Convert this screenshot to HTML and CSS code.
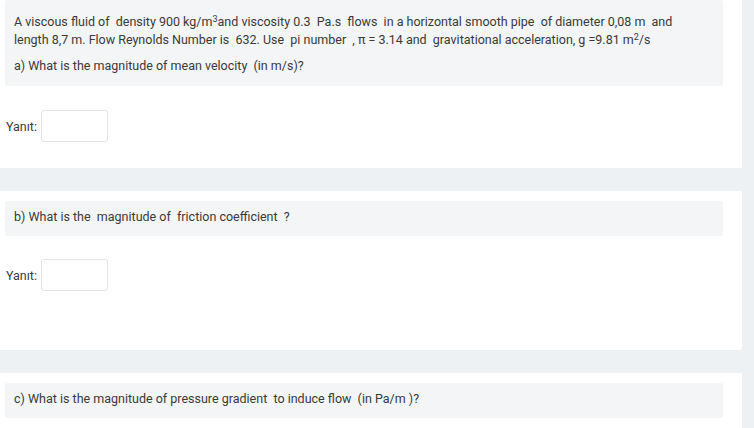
FILE: index.html
```html
<!DOCTYPE html>
<html>
<head>
<meta charset="utf-8">
<link rel="stylesheet" href="styles.css">
</head>
<body>
<div class="page">
  <div class="main">
    <div class="que first">
      <div class="formulation">
        <p class="intro">A viscous fluid of&nbsp; density 900 kg/m<sup>3</sup>and viscosity 0.3&nbsp; Pa.s&nbsp; flows&nbsp; in a horizontal smooth pipe&nbsp; of diameter 0,08 m&nbsp; and length 8,7 m. Flow Reynolds Number is&nbsp; 632. Use&nbsp; pi number&nbsp; , π = 3.14 and&nbsp; gravitational acceleration, g =9.81 m<sup>2</sup>/s</p>
        <p>a) What is the magnitude of mean velocity&nbsp; (in m/s)?</p>
      </div>
      <div class="answer">
        <label>Yanıt:</label>
        <span class="input"></span>
      </div>
    </div>
    <div class="band"></div>
    <div class="que second">
      <div class="formulation">
        <p>b) What is the&nbsp; magnitude of&nbsp; friction coefficient&nbsp; ?</p>
      </div>
      <div class="answer">
        <label>Yanıt:</label>
        <span class="input"></span>
      </div>
    </div>
    <div class="band"></div>
    <div class="que third">
      <div class="formulation">
        <p>c) What is the magnitude of pressure gradient&nbsp; to induce flow&nbsp; (in Pa/m )?</p>
      </div>
    </div>
  </div>
  <div class="strip"></div>
</div>
</body>
</html>
```
FILE: styles.css
```css
html, body {
  margin: 0;
  padding: 0;
  background: #ffffff;
}
body {
  font-family: Roboto, "Liberation Sans", sans-serif;
  font-size: 12.5px;
  color: #3a3a3a;
  width: 754px;
  height: 428px;
  overflow: hidden;
}
.page {
  display: flex;
  height: 428px;
}
.main {
  width: 742px;
  background: #ffffff;
}
.strip {
  width: 12px;
  background: #eef1f3;
}
.que {
  padding: 0 19px 0 5px;
}
.formulation {
  background: #f3f5f7;
  border-radius: 3px;
  padding: 7px 30px 10px 9px;
  line-height: 18px;
}
.formulation p {
  margin: 0;
}
.first .formulation {
  padding-top: 13px;
  padding-bottom: 11px;
}
.formulation p.intro {
  margin-bottom: 8px;
}
sup {
  font-size: 9px;
  line-height: 0;
  vertical-align: 4px;
}
.answer {
  display: flex;
  align-items: center;
  gap: 4px;
  margin-top: 24px;
  margin-left: 1px;
}
.answer label {
  color: #3a3a3a;
}
.input {
  display: block;
  width: 65px;
  height: 30px;
  border: 1px solid #e2e5e8;
  border-radius: 3px;
  background: #fff;
}
.first .answer {
  margin-bottom: 26px;
}
.second {
  padding-top: 10px;
}
.second .answer {
  margin-top: 23px;
  margin-bottom: 59px;
}
.third {
  padding-top: 10px;
}
.band {
  height: 23px;
  background: #eef1f3;
}
```
